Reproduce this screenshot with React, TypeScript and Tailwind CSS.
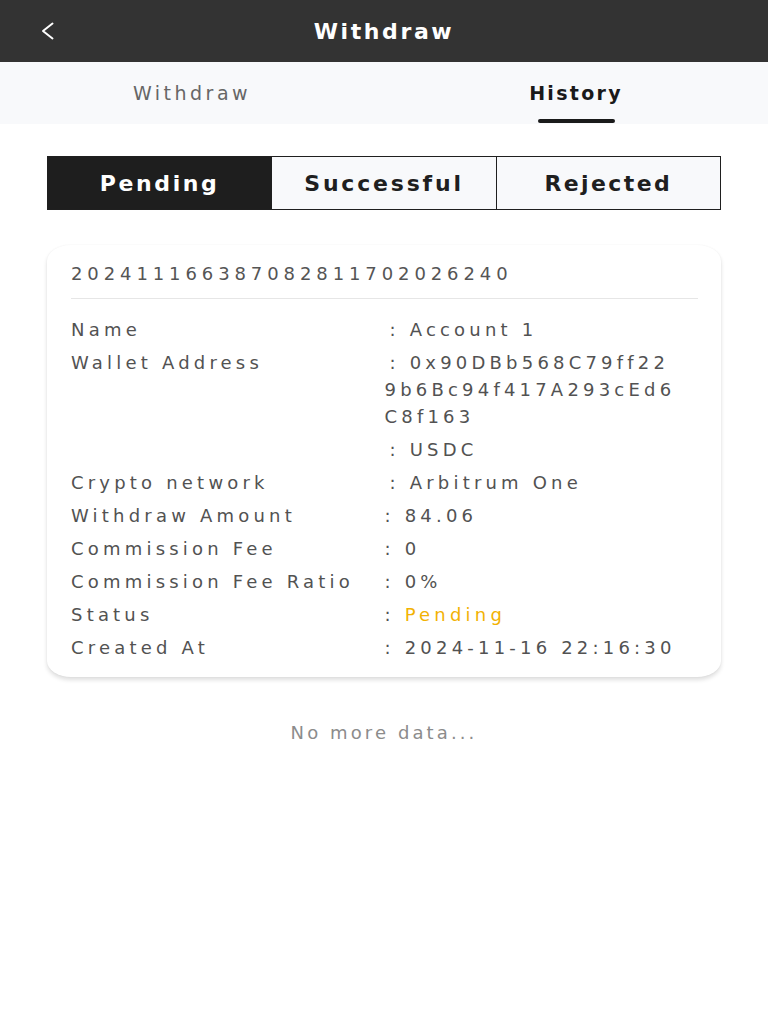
import React from "react";

const rows: { label: string; value: React.ReactNode; indent?: boolean }[] = [
  { label: "Name", value: ": Account 1", indent: true },
  {
    label: "Wallet Address",
    value: (
      <>
        <span className="block pl-[5px]">: 0x90DBb568C79ff22</span>
        <span className="block">9b6Bc94f417A293cEd6</span>
        <span className="block">C8f163</span>
      </>
    ),
  },
  { label: "", value: ": USDC", indent: true },
  { label: "Crypto network", value: ": Arbitrum One", indent: true },
  { label: "Withdraw Amount", value: ": 84.06" },
  { label: "Commission Fee", value: ": 0" },
  { label: "Commission Fee Ratio", value: ": 0%" },
  {
    label: "Status",
    value: (
      <>
        : <span className="text-[#f2b203]">Pending</span>
      </>
    ),
  },
  { label: "Created At", value: ": 2024-11-16 22:16:30" },
];

export default function App() {
  return (
    <div className="min-h-screen bg-white font-['DejaVu_Sans',sans-serif]">
      {/* Header */}
      <div className="grid h-[62px] grid-cols-[1fr_auto_1fr] items-center bg-[#333333]">
        <div className="pl-[41px]">
          <svg width="13" height="18" viewBox="0 0 13 18" fill="none">
            <polyline
              points="11.5,1.5 2,9 11.5,16.5"
              stroke="white"
              strokeWidth="2"
              strokeLinecap="round"
              strokeLinejoin="round"
            />
          </svg>
        </div>
        <div className="text-[22px] font-bold leading-[27px] tracking-[2.6px] text-white">Withdraw</div>
        <div />
      </div>

      {/* Tabs */}
      <div className="flex h-[62px] bg-[#f8f9fb]">
        <div className="flex flex-1 flex-col items-center pt-[18px]">
          <div className="text-[19px] leading-[27px] tracking-[3.5px] text-[#666666]">Withdraw</div>
          <div className="mt-[12px] h-[4px] w-[77px] rounded-full bg-transparent" />
        </div>
        <div className="flex flex-1 flex-col items-center pt-[18px]">
          <div className="text-[19px] font-bold leading-[27px] tracking-[2.3px] text-[#1a1a1a]">History</div>
          <div className="mt-[12px] h-[4px] w-[77px] rounded-full bg-[#1a1a1a]" />
        </div>
      </div>

      <div className="px-[47px] pt-[32px]">
        {/* Segmented control */}
        <div className="flex h-[54px] border-[1.5px] border-[#1f1f1f]">
          <div className="flex flex-1 items-center justify-center bg-[#1e1e1e] text-[22px] font-bold tracking-[2.6px] text-white">
            Pending
          </div>
          <div className="flex flex-1 items-center justify-center border-l-[1.5px] border-[#1f1f1f] bg-[#f8f9fb] text-[22px] font-bold tracking-[2.8px] text-[#1f1f1f]">
            Successful
          </div>
          <div className="flex flex-1 items-center justify-center border-l-[1.5px] border-[#1f1f1f] bg-[#f8f9fb] text-[22px] font-bold tracking-[2.4px] text-[#1f1f1f]">
            Rejected
          </div>
        </div>

        {/* Card */}
        <div className="mt-[35px] rounded-[24px/16px] bg-white pl-[24px] pr-[23px] pt-[15px] pb-[16px] shadow-[0_3px_4px_rgba(0,0,0,0.13),0_0_2px_rgba(0,0,0,0.05)]">
          <div className="border-b border-[#e6e6e6] pb-[11px] text-[18px] leading-[27px] tracking-[4.9px] text-[#555555]">
            202411166387082811702026240
          </div>
          <div className="flex flex-col gap-[6px] pt-[17px] text-[18px] leading-[27px] tracking-[4.2px] text-[#525252]">
            {rows.map((r, i) => (
              <div key={i} className="grid grid-cols-2">
                <div>{r.label}</div>
                <div className={r.indent ? "pl-[5px]" : ""}>{r.value}</div>
              </div>
            ))}
          </div>
        </div>

        <div className="pt-[42px] text-center text-[18px] leading-[27px] tracking-[3.1px] text-[#8c8c8c]">
          No more data...
        </div>
      </div>
    </div>
  );
}
